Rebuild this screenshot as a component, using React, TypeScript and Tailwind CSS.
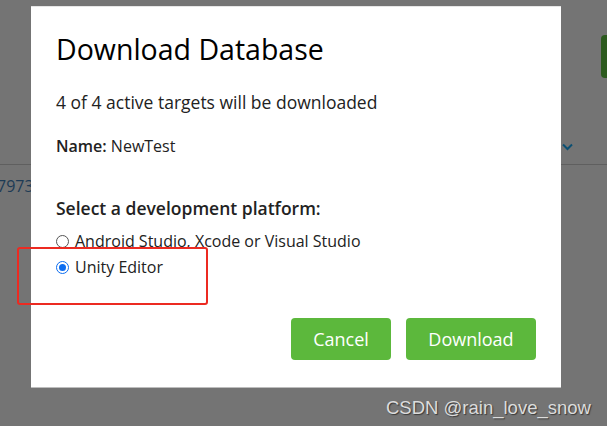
import React from "react";

const font = { fontFamily: '"Open Sans", "Noto Sans", sans-serif' };

function Radio({ checked }: { checked?: boolean }) {
  return (
    <span
      className={
        checked
          ? "inline-flex h-[13px] w-[13px] shrink-0 items-center justify-center rounded-full border border-[#0b6cf0] bg-white"
          : "inline-flex h-[13px] w-[13px] shrink-0 items-center justify-center rounded-full border border-[#555] bg-white"
      }
    >
      {checked && <span className="h-[7px] w-[7px] rounded-full bg-[#0b6cf0]" />}
    </span>
  );
}

export default function App() {
  return (
    <div
      className="relative h-[426px] w-[607px] overflow-hidden bg-[#747474]"
      style={font}
    >
      {/* page behind the overlay */}
      <div className="absolute left-0 right-0 top-[164px] h-px bg-[#5f5f5f]" />
      <div className="absolute left-[-3px] top-[174px] text-[16px] text-[#1d3b55]">7973</div>
      <svg
        className="absolute left-[562px] top-[143px]"
        width="11"
        height="8"
        viewBox="0 0 11 8"
      >
        <path d="M1 1.5 L5.5 6 L10 1.5" fill="none" stroke="#0b4f72" strokeWidth="2" />
      </svg>
      <div className="absolute left-[601px] top-[35px] h-[43px] w-[12px] rounded-l-[4px] bg-[#2c5a1e]" />

      {/* modal */}
      <div className="absolute left-[31px] top-[6px] flex h-[381px] w-[530px] flex-col border-t border-[#e6e6e6] bg-white px-[25px] pb-[27px] pt-[23px] shadow-[0_1px_0_#bdbdbd]">
        <h2 className="text-[28.5px] font-medium leading-[38px] text-black">
          Download Database
        </h2>
        <p className="mt-[22px] text-[17.5px] leading-[24px] text-[#222]">
          4 of 4 active targets will be downloaded
        </p>
        <p className="mt-[21px] text-[16px] leading-[22px] text-[#222]">
          <span className="font-semibold">Name:</span> NewTest
        </p>
        <p className="mt-[39px] text-[17.5px] font-semibold leading-[24px] text-[#222]">
          Select a development platform:
        </p>
        <div className="mt-[10px] flex flex-col gap-[4px] text-[16px] leading-[22px] text-[#222]">
          <label className="flex items-center gap-[6px]">
            <Radio />
            Android Studio, Xcode or Visual Studio
          </label>
          <label className="flex items-center gap-[6px]">
            <Radio checked />
            Unity Editor
          </label>
        </div>
        <div className="mt-auto flex justify-end gap-[15px]">
          <button className="h-[42px] w-[100px] rounded-[4px] bg-[#5cb83c] text-[18px] text-white">
            Cancel
          </button>
          <button className="h-[42px] w-[130px] rounded-[4px] bg-[#5cb83c] text-[18px] text-white">
            Download
          </button>
        </div>
      </div>

      {/* annotation */}
      <div className="absolute left-[17px] top-[247px] h-[58px] w-[191px] rounded-[3px] border-2 border-[#ec2a21]" />

      <div
        className="absolute left-[386px] top-[394px] text-[18.5px] text-[#dcdcdc] [text-shadow:1px_1px_1px_#3a3a3a]"
        style={{ fontFamily: '"Liberation Sans", Arial, sans-serif' }}
      >
        CSDN @rain_love_snow
      </div>
    </div>
  );
}
